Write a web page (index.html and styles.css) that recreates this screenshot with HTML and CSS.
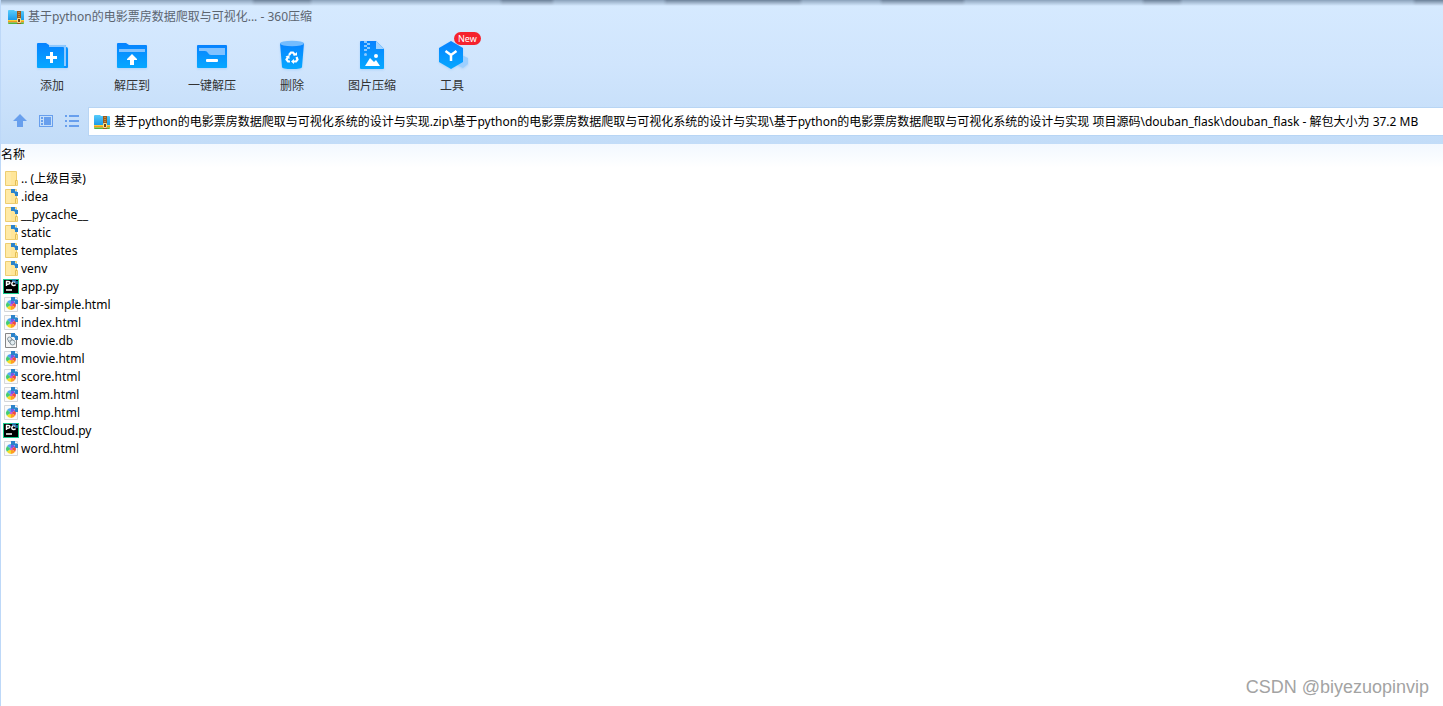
FILE: index.html
```html
<!DOCTYPE html>
<html lang="zh-CN">
<head>
<meta charset="utf-8">
<title>基于python的电影票房数据爬取与可视化... - 360压缩</title>
<link rel="stylesheet" href="styles.css">
</head>
<body>
<svg class="defs" aria-hidden="true">
  <defs>
    <linearGradient id="blue" x1="0" y1="0" x2="0" y2="1"><stop offset="0" stop-color="#0782ff"/><stop offset="1" stop-color="#06a8ff"/></linearGradient>
    <linearGradient id="sky" x1="0" y1="0" x2="0" y2="1"><stop offset="0" stop-color="#57ccfb"/><stop offset="1" stop-color="#1695e8"/></linearGradient>
    <symbol id="zip" viewBox="0 0 16 14">
      <path d="M0 1Q0 0 1 0H6L7 1H15Q16 1 16 2V11H0Z" fill="url(#sky)"/>
      <path d="M0 10H16V11H0Z" fill="#f6d33c"/><path d="M0 11H16V12.500H0Z" fill="#f39a1d"/><path d="M0 12.500H16V13Q16 14 15 14H1Q0 14 0 13Z" fill="#53b538"/>
      <path d="M9 1H13V14H9Z" fill="#9b5a1c"/><path d="M11 2V9" stroke="#e8b65a" stroke-width="1" stroke-dasharray="1 1"/>
      <rect x="9" y="8" width="4" height="5" rx="1" fill="#fbe08a"/><rect x="10" y="9" width="2" height="3" fill="#70431c"/>
    </symbol>
    <symbol id="folder" viewBox="0 0 16 18">
      <path d="M2.500 1.500H13.500V10.500H14.500V15.500H2.500Z" fill="#ffe699" stroke="#edcd70"/>
      <path d="M12.500 15V10.500H14" fill="none" stroke="#e3bd52"/><path d="M3 2H8V15H3Z" fill="#ffeaa6"/>
    </symbol>
    <symbol id="mark" viewBox="0 0 16 18">
      <path d="M8 1H12V5H8ZM12 4H15V8H12Z" fill="#2b83ca"/><path d="M12 3H14V4H12ZM11 5H12V6H11Z" fill="#75b8ea"/>
    </symbol>
    <symbol id="folder-marked" viewBox="0 0 16 18"><use href="#folder"/><use href="#mark"/></symbol>
    <symbol id="pycharm" viewBox="0 0 16 18">
      <rect x="0" y="1" width="16" height="15" fill="#18c98b"/><rect x="1" y="2" width="14" height="13" fill="#000"/>
      <path d="M3.500 8V3.500H5Q7 3.500 7 4.800T5 6.200H3.500M12.500 4.500Q11.500 3.500 10.500 3.500T8.800 5.500Q8.800 7.500 10.500 7.500T12.500 6.500M3 12H9" fill="none" stroke="#fff" stroke-width="1.400"/>
      <path d="M9 1H13V3H15V6H12V4H9Z" fill="#2b83ca" opacity=".7"/>
    </symbol>
    <symbol id="page" viewBox="0 0 16 18">
      <path d="M1.500 1.500H14.500V15.500H1.500Z" fill="#fafafa" stroke="#d5d7da"/>
      <g transform="translate(8 9)">
        <path d="M0 0L-4-3A5 5 0 0 1 0-5Z" fill="#54a7f4"/><path d="M0 0V-5A5 5 0 0 1 4.300-2.500Z" fill="#7657e5"/>
        <path d="M0 0L4.300-2.500A5 5 0 0 1 4.300 2.500Z" fill="#f04b45"/><path d="M0 0L4.300 2.500A5 5 0 0 1 0 5Z" fill="#ff9e20"/>
        <path d="M0 0V5A5 5 0 0 1-4.300 2.500Z" fill="#f2df28"/><path d="M0 0L-4.300 2.500A5 5 0 0 1-4-3Z" fill="#44cd72"/>
        <circle r="1.300" fill="#c95fda"/>
      </g>
      <use href="#mark"/>
    </symbol>
    <symbol id="database" viewBox="0 0 16 18">
      <path d="M2.500 1.500H11.500L13.500 5V15.500H2.500Z" fill="#f5f5f5" stroke="#858585"/>
      <circle cx="6.500" cy="7" r="2" fill="#e3edf1" stroke="#8b989f"/><circle cx="9.500" cy="10.500" r="2.500" fill="#e3edf1" stroke="#8b989f"/>
      <path d="M5 9L8 12M8 6L11 9" stroke="#8b989f"/><use href="#mark"/>
    </symbol>
  </defs>
</svg>

<div class="window">
  <header class="chrome">
    <div class="titlebar">
      <svg class="zip-icon"><use href="#zip"/></svg>
      <span>基于python的电影票房数据爬取与可视化... - 360压缩</span>
    </div>
    <nav class="toolbar" aria-label="工具栏">
      <button class="tool" type="button">
        <svg class="tool-icon" viewBox="0 0 32 32"><path d="M14 5H29Q30 5 30 7Q32 7 32 9V27Q32 28 31 28H14Z" fill="#0792ff"/><path d="M12 5H29Q30 5 30 6V26H12Z" fill="#8fc9ff"/><path d="M1 4Q1 3 2 3H10L13 5V7H27Q28 7 28 8V28H2Q1 28 1 27Z" fill="url(#blue)"/><path d="M15.500 12V23M10 17.500H21" stroke="#fff" stroke-width="3"/></svg>
        <span>添加</span>
      </button>
      <button class="tool" type="button">
        <svg class="tool-icon" viewBox="0 0 32 32"><path d="M1 4Q1 3 2 3H10L13 5H30Q31 5 31 6V27Q31 28 30 28H2Q1 28 1 27Z" fill="url(#blue)"/><path d="M3 9H29V12H3Z" fill="#81c2ff"/><path d="M16 14L21 19V20H18V25H14V20H11V19Z" fill="#fff"/></svg>
        <span>解压到</span>
      </button>
      <button class="tool" type="button">
        <svg class="tool-icon" viewBox="0 0 32 32"><rect x="1" y="5" width="30" height="23" rx="1" fill="url(#blue)"/><path d="M3 8H29V15H15Q13 15 12 13T9 11H3Z" fill="#81c2ff"/><rect x="10" y="19" width="12" height="3" rx="1" fill="#fff"/></svg>
        <span>一键解压</span>
      </button>
      <button class="tool" type="button">
        <svg class="tool-icon" viewBox="0 0 32 32"><path d="M4 3H28L26 27Q26 29 16 29T6 27Z" fill="url(#blue)"/><ellipse cx="16" cy="3.500" rx="12" ry="2.700" fill="#74bcff"/><g fill="none" stroke="#fff" stroke-width="2.200"><path d="M13 15L15 12.500H17L19 15M20.500 17L21.500 19.500L20 21.500H17M14 21.500H12L10.500 19.500L12 17"/></g><path d="M17 15.500H21V12ZM18 19V24L15 21.500ZM9.500 16.500L13.500 15V19Z" fill="#fff"/></svg>
        <span>删除</span>
      </button>
      <button class="tool" type="button">
        <svg class="tool-icon" viewBox="0 0 32 32"><path d="M4 2Q4 1 5 1H20L28 9V28Q28 29 27 29H5Q4 29 4 28Z" fill="url(#blue)"/><path d="M20 1L28 9H20Z" fill="#a1d3ff"/><path d="M8 1H11V3H8ZM11 3H14V5H11ZM8 5H11V7H8ZM11 7H14V9H11ZM8 9H11V11H8Z" fill="#8bc8ff"/><circle cx="9.500" cy="14.500" r="1.500" fill="#8bc8ff"/><path d="M9 26L14 18L18 22L20 20L24 26Z" fill="#fff"/><circle cx="20" cy="16" r="2" fill="#fff"/></svg>
        <span>图片压缩</span>
      </button>
      <button class="tool" type="button">
        <svg class="tool-icon" viewBox="0 0 32 32"><path d="M26 15L32 18V24L27 28L21 25Z" fill="#9dcfff"/><path d="M15 1L27 8V22L15 29L3 22V8Z" fill="url(#blue)"/><path d="M9.500 11L15 15L20.500 11M15 15V21" fill="none" stroke="#fff" stroke-width="2.500"/></svg>
        <span>工具</span><span class="badge">New</span>
      </button>
    </nav>
    <div class="location">
      <div class="navigation">
        <button class="nav-button" type="button" aria-label="上级目录"><svg viewBox="0 0 16 16"><path d="M8 1L15 8H11V14H5V8H1Z"/></svg></button>
        <button class="nav-button" type="button" aria-label="预览视图"><svg viewBox="0 0 16 16"><path fill-rule="evenodd" d="M1 2H15V14H1ZM2 3V13H14V3Z"/><path d="M3 4H5V6H3ZM3 7H5V9H3ZM3 10H5V12H3ZM6 4H13V12H6Z"/></svg></button>
        <button class="nav-button" type="button" aria-label="列表视图"><svg viewBox="0 0 16 16"><path d="M1 2H3V4H1ZM1 7H3V9H1ZM1 12H3V14H1ZM5 2H15V4H5ZM5 7H15V9H5ZM5 12H15V14H5Z"/></svg></button>
      </div>
      <div class="address">
        <svg class="zip-icon"><use href="#zip"/></svg>
        <span>基于python的电影票房数据爬取与可视化系统的设计与实现.zip\基于python的电影票房数据爬取与可视化系统的设计与实现\基于python的电影票房数据爬取与可视化系统的设计与实现 项目源码\douban_flask\douban_flask - 解包大小为 37.2 MB</span>
      </div>
    </div>
  </header>
  <main class="content">
    <table class="files">
      <thead><tr><th scope="col">名称</th></tr></thead>
      <tbody>
        <tr><td><svg class="file-icon"><use href="#folder"/></svg>.. (上级目录)</td></tr>
        <tr><td><svg class="file-icon"><use href="#folder-marked"/></svg>.idea</td></tr>
        <tr><td><svg class="file-icon"><use href="#folder-marked"/></svg>__pycache__</td></tr>
        <tr><td><svg class="file-icon"><use href="#folder-marked"/></svg>static</td></tr>
        <tr><td><svg class="file-icon"><use href="#folder-marked"/></svg>templates</td></tr>
        <tr><td><svg class="file-icon"><use href="#folder-marked"/></svg>venv</td></tr>
        <tr><td><svg class="file-icon"><use href="#pycharm"/></svg>app.py</td></tr>
        <tr><td><svg class="file-icon"><use href="#page"/></svg>bar-simple.html</td></tr>
        <tr><td><svg class="file-icon"><use href="#page"/></svg>index.html</td></tr>
        <tr><td><svg class="file-icon"><use href="#database"/></svg>movie.db</td></tr>
        <tr><td><svg class="file-icon"><use href="#page"/></svg>movie.html</td></tr>
        <tr><td><svg class="file-icon"><use href="#page"/></svg>score.html</td></tr>
        <tr><td><svg class="file-icon"><use href="#page"/></svg>team.html</td></tr>
        <tr><td><svg class="file-icon"><use href="#page"/></svg>temp.html</td></tr>
        <tr><td><svg class="file-icon"><use href="#pycharm"/></svg>testCloud.py</td></tr>
        <tr><td><svg class="file-icon"><use href="#page"/></svg>word.html</td></tr>
      </tbody>
    </table>
    <p class="watermark">CSDN @biyezuopinvip</p>
  </main>
</div>
</body>
</html>
```
FILE: styles.css
```css
* { box-sizing: border-box; }
body {
  margin: 0;
  font: 12px/18px "Noto Sans", "Noto Sans CJK SC", sans-serif;
  color: #000;
  background: #fff;
}
.defs { position: absolute; width: 0; height: 0; }
button { border: 0; padding: 0; background: none; font: inherit; color: inherit; }
svg { display: block; flex: none; }

.window {
  display: flex;
  flex-direction: column;
  min-height: 100vh;
  border-left: 1px solid #bdd8f8;
}
.chrome {
  position: relative;
  padding-bottom: 8px;
  background: linear-gradient(#d6eaff, #d0e5fd 45%, #c2dcf8);
}
.chrome::before {
  content: "";
  position: absolute;
  inset: 0 0 auto;
  height: 6px;
  background: linear-gradient(90deg, transparent 250px, #52667f 254px 308px, transparent 312px 498px, #52667f 502px 550px, transparent 554px 662px, #52667f 666px 798px, transparent 802px 878px, #52667f 882px 961px, transparent 965px 1140px, #52667f 1144px 1178px, transparent 1182px 1411px, #52667f 1415px), linear-gradient(#7890aa, #7890aa);
  opacity: .8;
  -webkit-mask-image: linear-gradient(#000, transparent);
  mask-image: linear-gradient(#000, transparent);
}
.titlebar {
  display: flex;
  align-items: center;
  gap: 4px;
  height: 32px;
  padding: 2px 7px 0;
  color: #5c6570;
  white-space: pre;
}
.zip-icon { width: 16px; height: 14px; }

.toolbar { display: flex; height: 75px; padding: 8px 0 0 11px; }
.tool {
  position: relative;
  display: flex;
  flex-direction: column;
  align-items: center;
  gap: 5px;
  width: 80px;
  height: 56px;
  color: #333;
}
.tool-icon { width: 32px; height: 32px; filter: drop-shadow(0 1px 1px #7abaf566); }
.badge {
  position: absolute;
  left: 42px;
  top: -8px;
  padding: 0 4px;
  border-radius: 7px;
  background: #f5222d;
  color: #fff;
  font-size: 9px;
  line-height: 13px;
}

.location { display: flex; align-items: center; }
.navigation { display: flex; gap: 10px; padding: 0 8px 2px 11px; }
.nav-button { width: 16px; height: 16px; }
.nav-button svg { width: 16px; height: 16px; fill: #689fed; }
.address {
  display: flex;
  align-items: center;
  flex: 1;
  min-width: 0;
  gap: 4px;
  height: 29px;
  padding-left: 5px;
  border: solid #b8d5f4;
  border-width: 1px 0 1px 1px;
  background: #fff;
  white-space: nowrap;
  overflow: hidden;
}

.content {
  display: flex;
  flex: 1;
  flex-direction: column;
  justify-content: space-between;
  background: linear-gradient(#f2f8ff, #fff 24px);
}
.files { width: 100%; border-collapse: collapse; }
.files th { height: 26px; padding: 0 0 4px; text-align: left; font-weight: 400; }
.files td { display: flex; align-items: center; gap: 2px; height: 18px; padding: 0 0 0 2px; }
.file-icon { width: 16px; height: 18px; }
.watermark {
  margin: 0;
  padding: 0 14px 8px 0;
  text-align: right;
  font: 18px/22px "Liberation Sans", sans-serif;
  color: #a3a3a3;
}
```
